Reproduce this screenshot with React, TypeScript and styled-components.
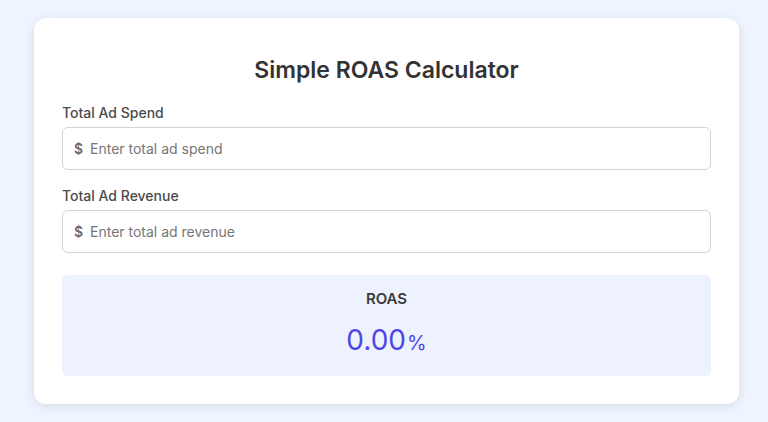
import { useState } from "react";
import styled, { createGlobalStyle } from "styled-components";

const GlobalStyle = createGlobalStyle`
  html, body {
    margin: 0;
    padding: 0;
    background: #eff5fe;
    font-family: Inter, "Noto Sans", Arial, sans-serif;
  }
  * {
    box-sizing: border-box;
  }
`;

type FieldProps = {
  label: string;
  placeholder: string;
  value: string;
  onChange: (v: string) => void;
};

const MoneyField = ({ label, placeholder, value, onChange }: FieldProps) => (
  <FieldGroup>
    <Label>{label}</Label>
    <InputWrapper>
      <Currency>$</Currency>
      <Input
        type="number"
        placeholder={placeholder}
        value={value}
        onChange={(e) => onChange(e.target.value)}
      />
    </InputWrapper>
  </FieldGroup>
);

const App = () => {
  const [spend, setSpend] = useState("");
  const [revenue, setRevenue] = useState("");

  const spendNum = parseFloat(spend);
  const revenueNum = parseFloat(revenue);
  const roas = spendNum > 0 && !isNaN(revenueNum) ? (revenueNum / spendNum) * 100 : 0;

  return (
    <>
      <GlobalStyle />
      <Page>
        <Card>
          <Title>Simple ROAS Calculator</Title>
          <MoneyField
            label="Total Ad Spend"
            placeholder="Enter total ad spend"
            value={spend}
            onChange={setSpend}
          />
          <MoneyField
            label="Total Ad Revenue"
            placeholder="Enter total ad revenue"
            value={revenue}
            onChange={setRevenue}
          />
          <ResultBox>
            <ResultLabel>ROAS</ResultLabel>
            <ResultValue>
              {roas.toFixed(2)}
              <Percent>%</Percent>
            </ResultValue>
          </ResultBox>
        </Card>
      </Page>
    </>
  );
};

export default App;

const Page = styled.div`
  padding: 18px 29px 18px 34px;
`;

const Card = styled.div`
  background: #ffffff;
  border-radius: 12px;
  box-shadow: 0 2px 10px rgba(30, 41, 59, 0.12);
  padding: 28px;
`;

const Title = styled.h1`
  margin: 8px 0 17px;
  font-size: 23px;
  line-height: 32px;
  font-weight: 600;
  color: #333333;
  text-align: center;
`;

const FieldGroup = styled.div`
  display: flex;
  flex-direction: column;
  gap: 4px;
  margin-bottom: 16px;
`;

const Label = styled.label`
  font-size: 14px;
  line-height: 20px;
  font-weight: 500;
  color: #4b4b4b;
`;

const InputWrapper = styled.div`
  display: flex;
  align-items: center;
  height: 43px;
  border: 1px solid #d4d4d8;
  border-radius: 6px;
  padding: 0 12px 0 11px;
  background: #ffffff;
`;

const Currency = styled.span`
  font-size: 14px;
  font-weight: 600;
  color: #6b6b6b;
  width: 16px;
`;

const Input = styled.input`
  flex: 1;
  border: none;
  outline: none;
  font-family: inherit;
  font-size: 14px;
  color: #333333;
  background: transparent;
  padding: 0;

  &::placeholder {
    color: #767676;
  }

  &::-webkit-outer-spin-button,
  &::-webkit-inner-spin-button {
    -webkit-appearance: none;
    margin: 0;
  }
`;

const ResultBox = styled.div`
  margin-top: 22px;
  background: #eef2fe;
  border-radius: 6px;
  padding: 14px 16px 15px;
  text-align: center;
`;

const ResultLabel = styled.div`
  font-size: 15px;
  line-height: 20px;
  font-weight: 600;
  color: #3a3a3a;
`;

const ResultValue = styled.div`
  margin-top: 13px;
  font-size: 28px;
  line-height: 36px;
  font-weight: 400;
  color: #4f46e5;
`;

const Percent = styled.span`
  font-size: 20px;
  margin-left: 1px;
`;
